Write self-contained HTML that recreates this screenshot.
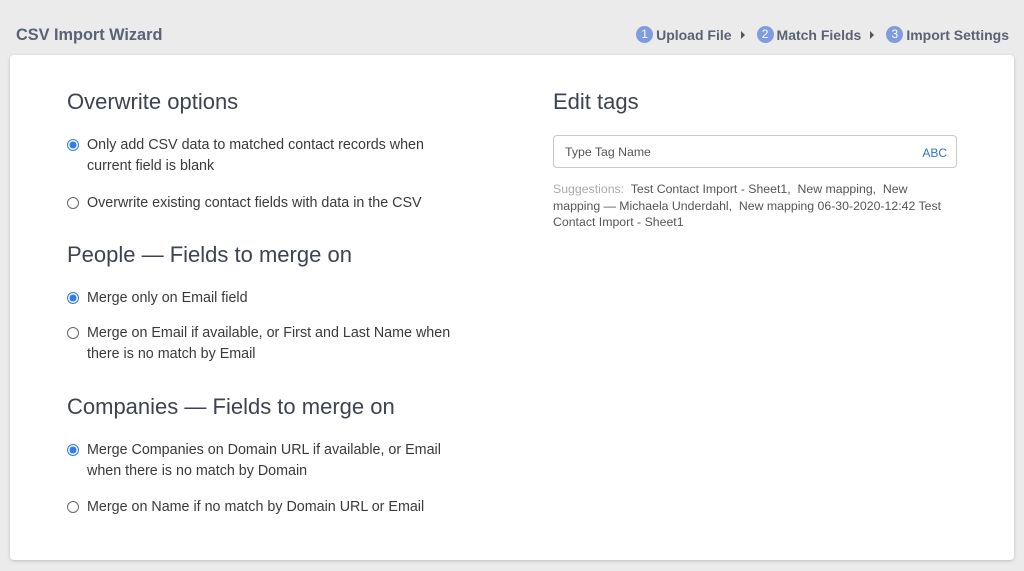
<!DOCTYPE html>
<html><head><meta charset="utf-8"><style>
*{margin:0;padding:0;box-sizing:border-box}
body{width:1024px;height:571px;background:#ebebeb;font-family:"Liberation Sans",Arial,sans-serif;position:relative;overflow:hidden;color:#3a3f4a}
.a{position:absolute;white-space:nowrap}
.title{left:16px;top:26px;font-size:16.3px;font-weight:bold;color:#5a6275}
.steps{right:15px;top:26px;font-size:14px;font-weight:bold;color:#5a6275;display:flex;align-items:center}
.num{display:inline-block;width:17px;height:17px;border-radius:50%;background:#7f9ce0;color:#fff;font-size:12px;font-weight:normal;text-align:center;line-height:17px;margin-right:3px}
.arr{display:inline-block;width:0;height:0;border-left:4px solid #555;border-top:4px solid transparent;border-bottom:4px solid transparent;margin:0 12px 0 9px}
.card{left:10px;top:55px;width:1004px;height:505px;background:#fff;border-radius:4px;box-shadow:0 1px 3px rgba(0,0,0,.2)}
h2{position:absolute;font-size:22px;font-weight:normal;color:#3d4350;white-space:nowrap}
.opt{position:absolute;left:87px;font-size:14.3px;line-height:21px;color:#3a3a3a}
.r{position:absolute;left:67px;width:12px;height:12px;border-radius:50%;border:1px solid #666;background:#fff}
.r.on{border:1px solid #2f7cf0;background:radial-gradient(circle,#2f7cf0 0 3.2px,#fff 3.8px)}
.inp{left:553px;top:135px;width:404px;height:33px;border:1px solid #c8c8c8;border-radius:4px}
.sug{left:553px;top:181px;width:392px;font-size:12.3px;line-height:16.5px;color:#555;white-space:normal}
</style></head><body>
<div class="a title">CSV Import Wizard</div>
<div class="a steps"><span class="num">1</span>Upload File<span class="arr"></span><span class="num">2</span>Match Fields<span class="arr"></span><span class="num">3</span>Import Settings</div>
<div class="a card"></div>
<h2 style="left:67px;top:89px">Overwrite options</h2>
<div class="r on" style="top:139px"></div>
<div class="opt" style="top:135px">Only add CSV data to matched contact records when<br>current field is blank</div>
<div class="r" style="top:197px"></div>
<div class="opt" style="top:193px">Overwrite existing contact fields with data in the CSV</div>
<h2 style="left:67px;top:242px">People — Fields to merge on</h2>
<div class="r on" style="top:292px"></div>
<div class="opt" style="top:288px">Merge only on Email field</div>
<div class="r" style="top:327px"></div>
<div class="opt" style="top:323px">Merge on Email if available, or First and Last Name when<br>there is no match by Email</div>
<h2 style="left:67px;top:394px">Companies — Fields to merge on</h2>
<div class="r on" style="top:444px"></div>
<div class="opt" style="top:440px">Merge Companies on Domain URL if available, or Email<br>when there is no match by Domain</div>
<div class="r" style="top:501px"></div>
<div class="opt" style="top:497px">Merge on Name if no match by Domain URL or Email</div>
<h2 style="left:553px;top:89px">Edit tags</h2>
<div class="a inp"><span class="a" style="left:11px;top:9px;font-size:12.3px;color:#555">Type Tag Name</span><span class="a" style="right:9px;top:10px;font-size:12px;color:#2f74c8">ABC</span></div>
<div class="a sug"><span style="color:#aaa">Suggestions:</span>&nbsp; Test Contact Import - Sheet1,&nbsp; New mapping,&nbsp; New mapping — Michaela Underdahl,&nbsp; New mapping 06-30-2020-12:42 Test Contact Import - Sheet1</div>
</body></html>
